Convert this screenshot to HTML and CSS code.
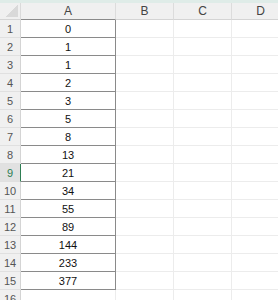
FILE: index.html
```html
<!DOCTYPE html>
<html lang="en">
<head>
  <meta charset="UTF-8">
  <title>Fibonacci Sheet</title>
  <link rel="stylesheet" href="styles.css">
</head>
<body>
  <div class="topbar"></div>
  <div class="sheet" id="sheet">
    <div class="corner"></div>
    <div class="col-head">A</div>
    <div class="col-head">B</div>
    <div class="col-head">C</div>
    <div class="col-head">D</div>
  </div>

  <script src="script.js"></script>
</body>
</html>
```

FILE: script.js
```js
const sheetEl = document.getElementById("sheet");
const values = [0, 1, 1, 2, 3, 5, 8, 13, 21, 34, 55, 89, 144, 233, 377];

function addCell(cls, text) {
  const div = document.createElement("div");
  div.className = cls;
  div.textContent = text;
  sheetEl.appendChild(div);
}

for (let r = 1; r <= 16; r++) {
  addCell(r === 9 ? "row-head active" : "row-head", r);
  if (r <= values.length) {
    addCell("cell data", values[r - 1]);
  } else {
    addCell("cell", "");
  }
  addCell("cell", "");
  addCell("cell", "");
  addCell("cell", "");
}
```

FILE: styles.css
```css
body {
  margin: 0;
  background: #fff;
  font-family: 'Liberation Sans', Arial, sans-serif;
  overflow: hidden;
}

.topbar {
  height: 3px;
  background: #dfece8;
}

.sheet {
  display: grid;
  grid-template-columns: 21px 95px 58px 58px 58px;
  grid-template-rows: 17px;
  grid-auto-rows: 18px;
}

.sheet > div {
  box-sizing: border-box;
  display: flex;
  align-items: center;
  justify-content: center;
}

.corner {
  background: #f0f0f0 linear-gradient(135deg, transparent 50%, #d9d9d9 50%) no-repeat right 2px bottom 2px / 13px 12px;
  border-right: 1px solid #dadada;
  border-bottom: 1px solid #d4d4d4;
}

.col-head {
  background: #f0f0f0;
  color: #444;
  font-size: 12px;
  border-right: 1px solid #dcdcdc;
  border-bottom: 1px solid #d4d4d4;
}

.row-head {
  background: #f0f0f0;
  color: #555;
  font-size: 11px;
  border-right: 1px solid #d4d4d4;
  border-bottom: 1px solid #e0e0e0;
}

.row-head.active {
  background: #e1e1e1;
  color: #2e7d52;
  border-right-color: #2e7d52;
}

.cell {
  border-right: 1px solid #ececec;
  border-bottom: 1px solid #ececec;
}

.data {
  color: #111;
  font-size: 11px;
  border-right-color: #8a8a8a;
  border-bottom-color: #8a8a8a;
}

.col-head:nth-child(2) {
  border-bottom-color: #8a8a8a;
}
```
